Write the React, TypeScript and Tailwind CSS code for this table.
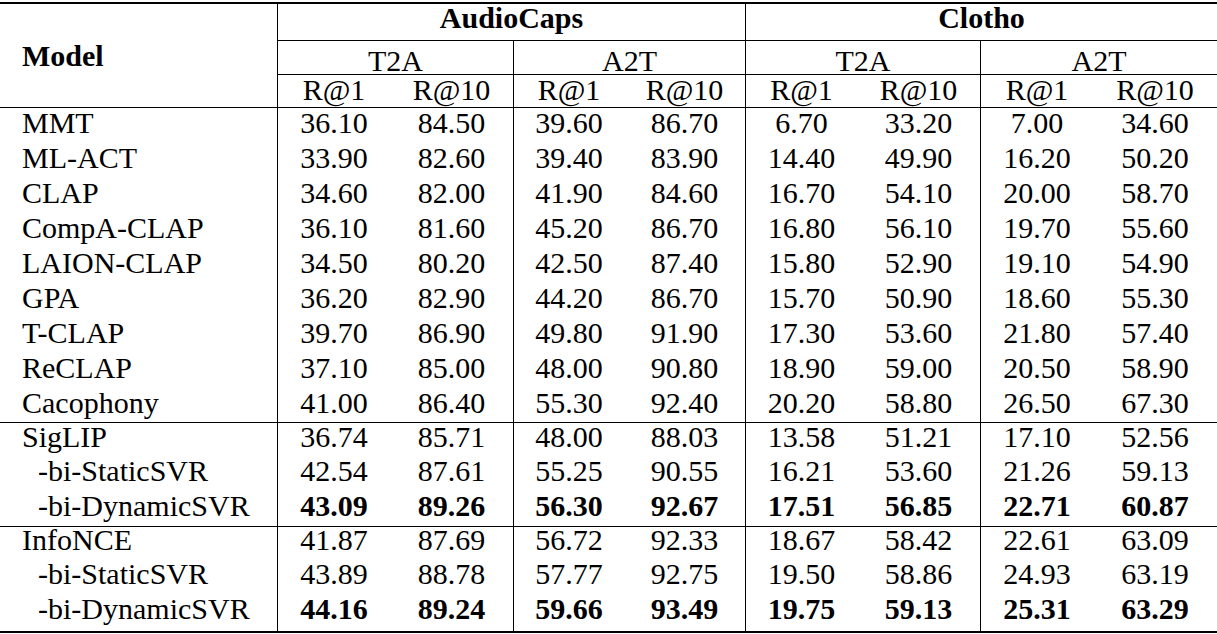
const blockA = [
  ['MMT', '36.10', '84.50', '39.60', '86.70', '6.70', '33.20', '7.00', '34.60'],
  ['ML-ACT', '33.90', '82.60', '39.40', '83.90', '14.40', '49.90', '16.20', '50.20'],
  ['CLAP', '34.60', '82.00', '41.90', '84.60', '16.70', '54.10', '20.00', '58.70'],
  ['CompA-CLAP', '36.10', '81.60', '45.20', '86.70', '16.80', '56.10', '19.70', '55.60'],
  ['LAION-CLAP', '34.50', '80.20', '42.50', '87.40', '15.80', '52.90', '19.10', '54.90'],
  ['GPA', '36.20', '82.90', '44.20', '86.70', '15.70', '50.90', '18.60', '55.30'],
  ['T-CLAP', '39.70', '86.90', '49.80', '91.90', '17.30', '53.60', '21.80', '57.40'],
  ['ReCLAP', '37.10', '85.00', '48.00', '90.80', '18.90', '59.00', '20.50', '58.90'],
  ['Cacophony', '41.00', '86.40', '55.30', '92.40', '20.20', '58.80', '26.50', '67.30'],
]

const blockB = [
  ['SigLIP', '36.74', '85.71', '48.00', '88.03', '13.58', '51.21', '17.10', '52.56'],
  ['-bi-StaticSVR', '42.54', '87.61', '55.25', '90.55', '16.21', '53.60', '21.26', '59.13'],
  ['-bi-DynamicSVR', '43.09', '89.26', '56.30', '92.67', '17.51', '56.85', '22.71', '60.87'],
]

const blockC = [
  ['InfoNCE', '41.87', '87.69', '56.72', '92.33', '18.67', '58.42', '22.61', '63.09'],
  ['-bi-StaticSVR', '43.89', '88.78', '57.77', '92.75', '19.50', '58.86', '24.93', '63.19'],
  ['-bi-DynamicSVR', '44.16', '89.24', '59.66', '93.49', '19.75', '59.13', '25.31', '63.29'],
]

// each block nudges its text a little differently to sit where the ruled lines leave it
function Row({ cells, last, pad }: { cells: string[]; last: boolean; pad: string }) {
  const [name, ...vals] = cells
  const sub = name.startsWith('-bi-')
  const best = name === '-bi-DynamicSVR'
  const line = last ? 'border-b border-black' : ''
  return (
    <>
      <div className={`flex items-center ${pad} ${sub ? 'pl-[38px]' : 'pl-[22px]'} ${line}`}>{name}</div>
      {vals.map((v, i) => (
        <div
          key={i}
          className={`flex items-center justify-center ${pad} ${i % 2 === 0 ? 'border-l border-black' : ''} ${best ? 'font-bold' : ''} ${line}`}
        >
          {v}
        </div>
      ))}
    </>
  )
}

export default function App() {
  return (
    <div className="w-[1217px] h-[634px] bg-white text-black overflow-hidden">
      <div
        className="mt-[2px] border-y-2 border-black grid grid-cols-[277px_113px_123px_111px_121px_112px_123px_113px_124px] grid-rows-[37px_34px_33px_repeat(9,35px)_repeat(6,34.67px)] text-[30px] leading-none"
        style={{ fontFamily: '"Liberation Serif", "Times New Roman", serif' }}
      >
        {/* header */}
        <div className="row-span-3 flex items-center pl-[22px] font-bold border-b border-black">Model</div>
        <div className="col-span-4 flex items-center justify-center pb-[8px] font-bold border-l border-b border-black">AudioCaps</div>
        <div className="col-span-4 flex items-center justify-center pb-[8px] font-bold border-l border-b border-black">Clotho</div>

        {['T2A', 'A2T', 'T2A', 'A2T'].map((t, i) => (
          <div key={i} className="col-span-2 flex items-center justify-center pt-[6px] border-l border-b border-black">{t}</div>
        ))}

        {[0, 1, 2, 3].map(i => (
          <>
            <div key={`a${i}`} className="flex items-center justify-center pb-[2px] border-l border-b border-black">R@1</div>
            <div key={`b${i}`} className="flex items-center justify-center pb-[2px] border-b border-black">R@10</div>
          </>
        ))}

        {blockA.map((r, i) => <Row key={`A${i}`} cells={r} pad="pb-[5px]" last={i === blockA.length - 1} />)}
        {blockB.map((r, i) => <Row key={`B${i}`} cells={r} pad="pb-[7px]" last={i === blockB.length - 1} />)}
        {blockC.map((r, i) => <Row key={`C${i}`} cells={r} pad="pb-[9px]" last={false} />)}
      </div>
    </div>
  )
}
